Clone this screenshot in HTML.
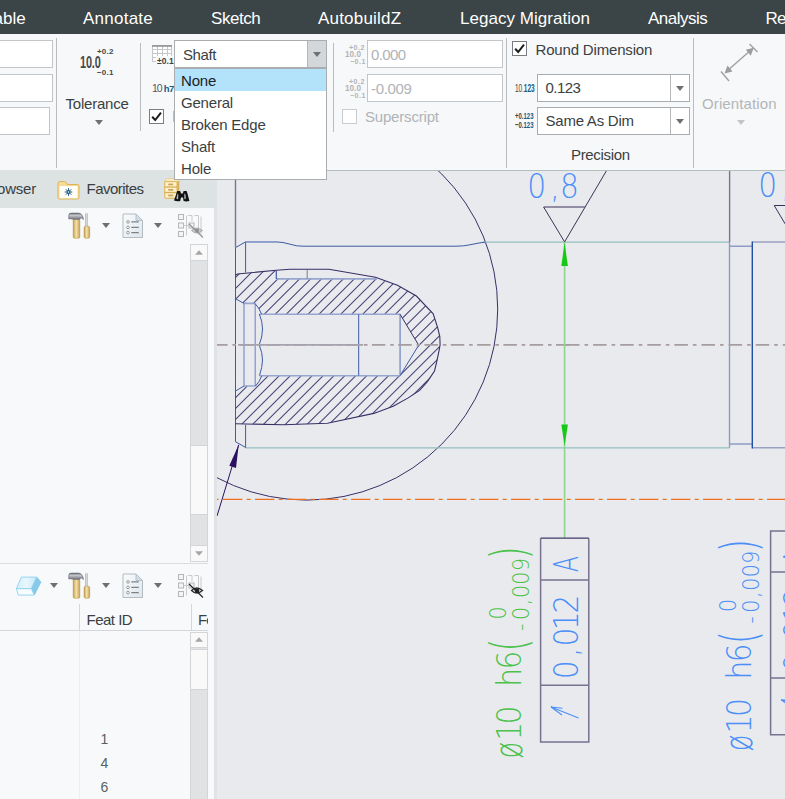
<!DOCTYPE html>
<html><head><meta charset="utf-8"><title>Drawing</title>
<style>
*{box-sizing:border-box;margin:0;padding:0}
html,body{width:785px;height:799px;overflow:hidden;background:#e9eaee}
body{position:relative;font-family:"Liberation Sans",sans-serif;color:#3a3f42;font-size:14px}
.abs{position:absolute}
#hdr{left:0;top:0;width:785px;height:34px;background:#3b4446}
#hdr span{position:absolute;top:9px;color:#fff;font-size:17px;white-space:nowrap;line-height:20px}
#rib{left:0;top:34px;width:785px;height:137px;background:#f7f8fa;border-bottom:1px solid #b3bfbd}
.sep{position:absolute;width:1px;background:#b9bdc0}
.inp{position:absolute;background:#fff;border:1px solid #c3c6c9}
.txt{position:absolute;white-space:nowrap;line-height:18px}
.dis{color:#b0b3b6}
.cb{position:absolute;width:15px;height:15px;border:1px solid #7a7e82;background:#fff}
.tri{position:absolute;width:0;height:0;border-left:4px solid transparent;border-right:4px solid transparent;border-top:5px solid #6d7174}
#left{left:0;top:170px;width:217px;height:629px;background:#dfe3e5}
#tabs{left:0;top:170px;width:217px;height:38px;background:#dde2e3}
#tree{left:0;top:208px;width:214px;height:591px;background:#f7f9fa}
.sb{position:absolute;background:#e1e2e4;border:1px solid #d3d5d8}
.thumb{position:absolute;background:#f9f9fa;border:1px solid #d3d5d8}
#dd{left:174px;top:68px;width:153px;height:112px;background:#fff;border:1px solid #a9adb0}
#dd div{height:22px;line-height:24px;padding-left:6px;font-size:15px;letter-spacing:-.2px;color:#3a3f42}
</style></head><body>
<div id="hdr" class="abs">
<span style="left:-6.5px">able</span><span style="left:83px;letter-spacing:.24px">Annotate</span><span style="left:211px;letter-spacing:-.43px">Sketch</span><span style="left:318px;letter-spacing:.2px">AutobuildZ</span><span style="left:460px;letter-spacing:.04px">Legacy Migration</span><span style="left:648px;letter-spacing:-.52px">Analysis</span><span style="left:765.5px;letter-spacing:-.9px">Review</span>
</div>
<div id="rib" class="abs">
<!-- left inputs -->
<div class="inp" style="left:-10px;top:6px;width:63px;height:28px"></div>
<div class="inp" style="left:-10px;top:40px;width:63px;height:28px"></div>
<div class="inp" style="left:-10px;top:73px;width:60px;height:28px"></div>
<div class="sep" style="left:56px;top:4px;height:130px"></div>
<!-- tolerance big icon -->
<div class="txt" style="left:79.500px;top:18px;font-size:16.5px;font-weight:bold;letter-spacing:-.2px;color:#45484b;transform:scaleX(.66);transform-origin:0 0;line-height:20px">10.0</div>
<div class="txt" style="left:97px;top:12.5px;font-size:8px;font-weight:bold;color:#45484b;line-height:10px;letter-spacing:.2px">+0.2</div>
<div class="txt" style="left:97px;top:33.500px;font-size:8px;font-weight:bold;color:#45484b;line-height:10px;letter-spacing:.2px">&minus;0.1</div>
<div class="txt" id="t_tol" style="left:65.5px;top:61px;font-size:15px;letter-spacing:-0.22px">Tolerance</div>
<div class="tri" style="left:95px;top:86px"></div>
<div class="sep" style="left:140px;top:9px;height:88px"></div>
<!-- table icon -->
<svg class="abs" style="left:151px;top:10px" width="22" height="22" viewBox="0 0 22 22"><rect x="1.5" y="1.5" width="19" height="16" fill="#fff" stroke="#c5c8ca"/><path d="M1.5 5.5h19M1.5 9.5h19M1.500 13.500h19M6.5 1.5v16M11.5 1.5v16M16.5 1.5v16" stroke="#c5c8ca" fill="none"/><rect x="1" y="1" width="20" height="1.800" fill="#96999c"/></svg>
<div class="txt" style="left:156px;top:22px;font-size:8.5px;font-weight:bold;color:#3f4346;line-height:9px;background:#f7f8fa;padding:1px 0 0 1px;letter-spacing:.1px">&plusmn;0.1</div>
<div class="txt" style="left:152px;top:49px;font-size:10.5px;color:#55595c;line-height:10px;letter-spacing:-1px">10<span style="color:#135d86;font-size:9.5px;font-weight:bold;margin-left:2px;letter-spacing:-.6px">h7</span></div>
<div class="cb" style="left:149px;top:75px"><svg width="13" height="13" viewBox="0 0 13 13" style="display:block"><path d="M2.200 6.800l3 3.200L11 2.600" stroke="#1c1c1c" stroke-width="2" fill="none"/></svg></div>
<div class="abs" style="left:172.500px;top:77px;width:1.500px;height:11px;background:#eab66a"></div>
<!-- combo shaft -->
<div class="inp" style="left:174px;top:6px;width:153px;height:28px;border-color:#a9adb0"></div>
<div class="abs" style="left:307px;top:7px;width:19px;height:26px;background:#d4d7d9;border-left:1px solid #b5b8bb"></div>
<div class="tri" style="left:313px;top:18px"></div>
<div class="txt" id="t_shaft" style="left:183px;top:12px;font-size:15px;letter-spacing:-0.38px">Shaft</div>
<div class="sep" style="left:333px;top:9px;height:89px"></div>
<!-- disabled icons -->
<div class="txt dis" style="left:345px;top:16.7px;font-size:8.200px;font-weight:bold;line-height:8px;letter-spacing:0;color:#b1b4b6">10.0</div>
<div class="txt dis" style="left:349px;top:10px;font-size:7px;font-weight:bold;line-height:7px;letter-spacing:.5px;color:#b1b4b6">+0.2</div>
<div class="txt dis" style="left:350px;top:24px;font-size:7px;font-weight:bold;line-height:7px;letter-spacing:.5px;color:#b1b4b6">&minus;0.1</div>
<div class="txt dis" style="left:345px;top:50.7px;font-size:8.200px;font-weight:bold;line-height:8px;letter-spacing:0;color:#b1b4b6">10.0</div>
<div class="txt dis" style="left:349px;top:44px;font-size:7px;font-weight:bold;line-height:7px;letter-spacing:.5px;color:#b1b4b6">+0.2</div>
<div class="txt dis" style="left:350px;top:58px;font-size:7px;font-weight:bold;line-height:7px;letter-spacing:.5px;color:#b1b4b6">&minus;0.1</div>
<div class="inp" style="left:367px;top:6px;width:136px;height:28px"></div>
<div class="txt dis" id="t_v1" style="left:371px;top:12px;font-size:15px;letter-spacing:-0.6px">0.000</div>
<div class="inp" style="left:367px;top:40px;width:136px;height:28px"></div>
<div class="txt dis" id="t_v2" style="left:371px;top:46px;font-size:15px;letter-spacing:-0.33px">-0.009</div>
<div class="cb" style="left:342px;top:75px;border-color:#c9ccce"></div>
<div class="txt dis" id="t_sup" style="left:365px;top:74px;font-size:15px;letter-spacing:-0.19px">Superscript</div>
<div class="sep" style="left:506px;top:4px;height:130px"></div>
<!-- precision group -->
<div class="cb" style="left:512px;top:7px"><svg width="13" height="13" viewBox="0 0 13 13" style="display:block"><path d="M2.200 6.800l3 3.200L11 2.600" stroke="#1c1c1c" stroke-width="2" fill="none"/></svg></div>
<div class="txt" id="t_rd" style="left:535.5px;top:6.7px;font-size:15px;letter-spacing:-0.17px">Round Dimension</div>
<div class="txt" style="left:514.500px;top:50px;font-size:10px;line-height:10px;letter-spacing:-.1px;color:#3e4245;transform:scaleX(.65);transform-origin:0 0">10.<b style="color:#135d86">123</b></div>
<div class="inp" style="left:537px;top:40px;width:153px;height:28px;border-color:#a9adb0"></div>
<div class="abs" style="left:670px;top:41px;width:1px;height:26px;background:#b5b8bb"></div>
<div class="tri" style="left:676px;top:52px"></div>
<div class="txt" id="t_p1" style="left:545.5px;top:45px;font-size:15px;letter-spacing:-0.52px">0.123</div>
<div class="txt" style="left:514.500px;top:78.200px;font-size:9.5px;font-weight:bold;line-height:8.700px;color:#3e4245;transform:scaleX(.63);transform-origin:0 0">+0.<span style="color:#135d86">123</span><br>&minus;0.<span style="color:#135d86">123</span></div>
<div class="inp" style="left:537px;top:73px;width:153px;height:28px;border-color:#a9adb0"></div>
<div class="abs" style="left:670px;top:74px;width:1px;height:26px;background:#b5b8bb"></div>
<div class="tri" style="left:676px;top:85px"></div>
<div class="txt" id="t_p2" style="left:545.5px;top:78px;font-size:15px;letter-spacing:-0.23px">Same As Dim</div>
<div class="txt" id="t_prec" style="left:571px;top:112px;font-size:15px;letter-spacing:-0.33px">Precision</div>
<div class="sep" style="left:693px;top:4px;height:130px"></div>
<!-- orientation -->
<svg class="abs" style="left:716px;top:8px" width="46" height="40" viewBox="716 42 46 40"><g stroke="#9b9ea0" stroke-width="1.3" fill="none"><path d="M727 71L751 50"/><path d="M721 71.5l8 9.5M749.5 44l8 8"/></g><path d="M724.5 73.5l8-2-5-6zM753.8 47.8l-8 2 5 6z" fill="#9b9ea0"/></svg>
<div class="txt dis" id="t_ori" style="left:702px;top:61px;font-size:15px;color:#b3b6b8;letter-spacing:0.11px">Orientation</div>
<div class="tri" style="left:737px;top:86px;border-top-color:#c3c5c7"></div>
</div>
<div id="left" class="abs"></div>
<div id="tabs" class="abs">
<div class="txt" style="left:-3px;top:10px;font-size:15px;letter-spacing:-.2px">owser</div>
<svg class="abs" style="left:57px;top:9px" width="23" height="22" viewBox="0 0 23 22"><path d="M1 5q0-2.500 2-2.500h4.500q1.200 0 2 1.500l.8 1.500h10.200q1.500 0 1.500 1.500v11.500q0 1.500-1.500 1.500h-18q-1.500 0-1.500-1.500z" fill="#f6dc9a" stroke="#dfb253"/><rect x="2" y="6.500" width="19" height="13" rx=".8" fill="#fffdf6" stroke="#ecd08a" stroke-width=".7"/><g stroke="#1b5c88" stroke-width="1"><path d="M11.5 9.200v7.600M7.700 13h7.600M8.800 10.300l5.400 5.400M14.200 10.300l-5.400 5.400"/></g><circle cx="11.500" cy="13" r="1.900" fill="#1b5c88"/><circle cx="11.500" cy="13" r=".8" fill="#fff"/></svg>
<div class="txt" id="t_fav" style="left:86.5px;top:10px;font-size:15px;letter-spacing:-.52px">Favorites</div>
<svg class="abs" style="left:164px;top:8px" width="26" height="25" viewBox="0 0 26 25"><defs><linearGradient id="bn" x1="0" x2="1"><stop offset="0" stop-color="#1a1a1a"/><stop offset=".45" stop-color="#c4c6c8"/><stop offset=".8" stop-color="#3a3a3a"/><stop offset="1" stop-color="#111"/></linearGradient></defs><path d="M.5 3.500L3 .6h10.500l1.800 2.900z" fill="#fbeec8" stroke="#e2bf6c" stroke-width=".6"/><path d="M13 3.500h2.300v15.500l-2.300 1.600z" fill="#d7b15a"/><rect x=".6" y="3.400" width="12.500" height="17" rx=".8" fill="#f7dc98" stroke="#d9b25c" stroke-width=".8"/><path d="M.6 9h12.500M.6 14.600h12.500" stroke="#cfa650" stroke-width=".9"/><g fill="#fdf1cf"><rect x="1.600" y="4.500" width="10.500" height="3.600"/><rect x="1.600" y="10" width="10.500" height="3.600"/><rect x="1.600" y="15.600" width="10.500" height="3.600"/></g><g fill="#c9a557"><rect x="4.200" y="5.600" width="5" height="1.700"/><rect x="4.200" y="11" width="5" height="1.700"/><rect x="4.200" y="16.600" width="5" height="1.700"/></g><path d="M10 22.500l2.200-6.500 1-3h3l.8 2.500h1.800l.8-2.500h3l1 3 1.800 7q-3 .8-5.800 0l-.6-3.500h-2l-.8 3.500q-3 .8-6.200-.5z" fill="#111"/><path d="M11.800 20.800l1.900-5h1.600l-.8 5.300q-1.400.3-2.700-.3z" fill="url(#bn)"/><path d="M19.600 15.800h1.600l1.600 5q-1.300.5-2.600.3z" fill="url(#bn)"/></svg>
</div>
<div id="tree" class="abs">
<!-- tree toolbar -->
<svg class="abs" style="left:68px;top:4px" width="23" height="27" viewBox="0 0 23 27"><defs><linearGradient id="wd1" x1="0" x2="1"><stop offset="0" stop-color="#c29a4c"/><stop offset=".45" stop-color="#f6e3ae"/><stop offset="1" stop-color="#c79f52"/></linearGradient><linearGradient id="hd1" x1="0" x2="0" y1="0" y2="1"><stop offset="0" stop-color="#70747b"/><stop offset=".35" stop-color="#c3c6cb"/><stop offset="1" stop-color="#6a6e75"/></linearGradient></defs><rect x="5.200" y="7" width="6.600" height="19.200" rx="1.500" fill="url(#wd1)" stroke="#b08a42" stroke-width=".5"/><path d="M.8 6.900V3Q.9 1.300 3 1.100H10.500Q14.800 1.500 15.400 7.600Q14.400 4.900 12.200 6.400L11.800 7.300H5.200Q3 6.400 .8 6.900z" fill="url(#hd1)" stroke="#5d6168" stroke-width=".6"/><rect x="17.200" y="1.400" width="2.500" height="13" fill="#aeb1b8"/><rect x="17.900" y="1.400" width=".9" height="13" fill="#dfe1e4"/><rect x="16.100" y="14.200" width="5.600" height="12" rx="1.500" fill="url(#wd1)" stroke="#b08a42" stroke-width=".5"/></svg><svg class="abs" style="left:122px;top:5px" width="22" height="26" viewBox="0 0 22 26"><defs><linearGradient id="dg5" x1="0" x2="1" y1="0" y2="1"><stop offset="0" stop-color="#fbfcfd"/><stop offset="1" stop-color="#dde6ec"/></linearGradient></defs><path d="M1 1h13l6.500 6.500v17h-19.500z" fill="url(#dg5)" stroke="#b3bac0"/><path d="M14 1v6.500h6.500z" fill="#cfe0ea" stroke="#b3bac0" stroke-width=".8"/><g stroke="#7d8287" stroke-width="1.100"><path d="M9.300 8.900h7.500M9.300 14.400h7.500M9.300 19.600h7.500"/></g><g fill="#fff" stroke="#7d8287" stroke-width=".8"><circle cx="6" cy="8.900" r="1.300"/><circle cx="6" cy="14.400" r="1.300"/><circle cx="6" cy="19.600" r="1.300"/></g></svg><svg class="abs" style="left:177px;top:5px" width="27" height="26" viewBox="0 0 27 26"><g fill="#f3f4f5" stroke="#b4b7ba" stroke-width="1"><rect x="1.5" y="1.5" width="5" height="5"/><rect x="1.5" y="10" width="5" height="5"/><rect x="1.5" y="18.5" width="5" height="5"/><rect x="12" y="10" width="5" height="5"/></g><path d="M6.5 12.5h5.5M9.5 2.5v20M11 2.5h4v6M17.5 2.5h4v14M24 3.5v18" stroke="#c9cbcd" fill="none"/><path d="M14.5 17.5q5-5 11 0q-6 5-11 0z" fill="#c8cacc" stroke="#9a9da0" stroke-width=".8"/><circle cx="20" cy="17.6" r="2" fill="#8d9093"/><path d="M12 11l14 13.5" stroke="#8e9194" stroke-width="1.1"/></svg>
<div class="tri" style="left:102px;top:15px"></div><div class="tri" style="left:154px;top:15px"></div>
<div class="sb" style="left:190px;top:36px;width:18px;height:318px"></div>
<div class="thumb" style="left:190px;top:36px;width:18px;height:17px"></div>
<svg class="abs" style="left:195px;top:42px" width="8" height="5"><path d="M0 4.700L4 .2 8 4.700z" fill="#a3a6a9"/></svg>
<div class="thumb" style="left:190px;top:237px;width:18px;height:70px"></div>
<div class="thumb" style="left:190px;top:337px;width:18px;height:17px"></div>
<svg class="abs" style="left:195px;top:343px" width="8" height="5"><path d="M0 .3L4 4.800 8 .3z" fill="#a3a6a9"/></svg>
<div class="abs" style="left:0;top:355px;width:208px;height:1px;background:#d9dde0"></div>
<!-- second toolbar -->
<svg class="abs" style="left:15px;top:366px" width="28" height="24" viewBox="0 0 28 24"><defs><linearGradient id="er" x1="0" x2="1"><stop offset="0" stop-color="#d2eefb"/><stop offset=".5" stop-color="#e9f7fd"/><stop offset="1" stop-color="#c3e8f8"/></linearGradient></defs><path d="M21.700 3.100L25.900 8.100L19.400 20.900L16.300 14.600z" fill="#86c9e9" stroke="#7cc4e6" stroke-width=".8"/><path d="M1.400 14.600H16.300L19.200 21.100H3.300z" fill="#f7fcfe" stroke="#8fd2ef" stroke-width=".9"/><path d="M6.400 3.100H21.700L16.300 14.600H1.400z" fill="url(#er)" stroke="#8fd2ef" stroke-width=".9"/></svg>
<div class="tri" style="left:50px;top:375px"></div>
<svg class="abs" style="left:68px;top:364px" width="23" height="27" viewBox="0 0 23 27"><defs><linearGradient id="wd2" x1="0" x2="1"><stop offset="0" stop-color="#c29a4c"/><stop offset=".45" stop-color="#f6e3ae"/><stop offset="1" stop-color="#c79f52"/></linearGradient><linearGradient id="hd2" x1="0" x2="0" y1="0" y2="1"><stop offset="0" stop-color="#70747b"/><stop offset=".35" stop-color="#c3c6cb"/><stop offset="1" stop-color="#6a6e75"/></linearGradient></defs><rect x="5.200" y="7" width="6.600" height="19.200" rx="1.500" fill="url(#wd2)" stroke="#b08a42" stroke-width=".5"/><path d="M.8 6.900V3Q.9 1.300 3 1.100H10.500Q14.800 1.500 15.400 7.600Q14.400 4.900 12.200 6.400L11.800 7.300H5.200Q3 6.400 .8 6.900z" fill="url(#hd2)" stroke="#5d6168" stroke-width=".6"/><rect x="17.200" y="1.400" width="2.500" height="13" fill="#aeb1b8"/><rect x="17.900" y="1.400" width=".9" height="13" fill="#dfe1e4"/><rect x="16.100" y="14.200" width="5.600" height="12" rx="1.500" fill="url(#wd2)" stroke="#b08a42" stroke-width=".5"/></svg><svg class="abs" style="left:122px;top:365px" width="22" height="26" viewBox="0 0 22 26"><defs><linearGradient id="dg365" x1="0" x2="1" y1="0" y2="1"><stop offset="0" stop-color="#fbfcfd"/><stop offset="1" stop-color="#dde6ec"/></linearGradient></defs><path d="M1 1h13l6.500 6.500v17h-19.500z" fill="url(#dg365)" stroke="#b3bac0"/><path d="M14 1v6.500h6.500z" fill="#cfe0ea" stroke="#b3bac0" stroke-width=".8"/><g stroke="#7d8287" stroke-width="1.100"><path d="M9.300 8.900h7.500M9.300 14.400h7.500M9.300 19.600h7.500"/></g><g fill="#fff" stroke="#7d8287" stroke-width=".8"><circle cx="6" cy="8.900" r="1.300"/><circle cx="6" cy="14.400" r="1.300"/><circle cx="6" cy="19.600" r="1.300"/></g></svg><svg class="abs" style="left:177px;top:365px" width="27" height="26" viewBox="0 0 27 26"><g fill="#f3f4f5" stroke="#b4b7ba" stroke-width="1"><rect x="1.5" y="1.5" width="5" height="5"/><rect x="1.5" y="10" width="5" height="5"/><rect x="1.5" y="18.5" width="5" height="5"/><rect x="12" y="10" width="5" height="5"/></g><path d="M6.5 12.5h5.5M9.5 2.5v20M11 2.5h4v6M17.5 2.5h4v14M24 3.5v18" stroke="#c9cbcd" fill="none"/><path d="M14.5 17.5q5-5 11 0q-6 5-11 0z" fill="#e9eaeb" stroke="#2a2c2e" stroke-width="1.300"/><circle cx="20" cy="17.6" r="2.300" fill="#222"/><path d="M12 11l14 13.5" stroke="#222" stroke-width="1.1"/></svg>
<div class="tri" style="left:102px;top:375px"></div><div class="tri" style="left:154px;top:375px"></div>
<!-- table header -->
<div class="abs" style="left:0;top:422px;width:208px;height:1px;background:#d3d7da"></div>
<div class="abs" style="left:79px;top:396px;width:1px;height:27px;background:#d3d7da"></div>
<div class="abs" style="left:79px;top:423px;width:1px;height:180px;background:#eceef0"></div>
<div class="abs" style="left:191px;top:396px;width:1px;height:27px;background:#d3d7da"></div>
<div class="txt" id="t_feat" style="left:86.5px;top:403px;font-size:15px;letter-spacing:-.5px">Feat ID</div>
<div class="txt" style="left:198px;top:403px;font-size:15px;width:10px;overflow:hidden;letter-spacing:-.8px">Fe</div>
<div class="sb" style="left:190px;top:424px;width:18px;height:170px"></div>
<div class="thumb" style="left:190px;top:424px;width:18px;height:16px"></div>
<svg class="abs" style="left:195px;top:429px" width="8" height="5"><path d="M0 4.700L4 .2 8 4.700z" fill="#a3a6a9"/></svg>
<div class="thumb" style="left:190px;top:441px;width:18px;height:41px"></div>
<div class="txt" style="left:100.5px;top:522px;font-size:14px;color:#5b5f63">1</div>
<div class="txt" style="left:100.5px;top:546px;font-size:14px;color:#5b5f63">4</div>
<div class="txt" style="left:100.5px;top:570px;font-size:14px;color:#5b5f63">6</div>
</div>
<svg id="draw" class="abs" style="left:217px;top:171px" width="568" height="628" viewBox="217 171 568 628" fill="none" stroke-width="1">
<defs><clipPath id="hc"><path clip-rule="evenodd" d="M235.3 275.2L237.5 274.0L276.2 270.3L276.2 278.9L377 278.9L397.5 285.3L416.4 296.0L433.2 313.8L437.8 328.1L439.8 336.5L440.1 344.8L439.1 350.3L436.6 362.4L434.5 371.0L427.6 381.3L419.6 390.4L408.2 397.9L393.2 406.3L373.8 413.4L327.5 423.2L283.5 424.7L235.4 423.8ZM235.5 298.8L244 303.4L255 303.4Q259 307.500 261.500 314L400.1 314.3L418.6 345.2L400.1 375.6L261.800 375.7Q259.5 382 255.5 386L244 386L235.5 391Z"/></clipPath></defs>
<circle cx="306.7" cy="309.1" r="191" stroke="#3a2f66"/>
<path d="M482.500 242.1H729.5M245.6 447.8H729.5" stroke="#92bfbd" stroke-width="1.3"/>
<path d="M235.5 247.6V441.7L245.6 447.5V424.8M235.5 247.6L245.6 241.9V272.5M245.6 241.9H276Q283 242 290 244.200T303 246.2H456Q464 246.200 471 244.600T485.300 242.100" stroke="#3f5aa6"/>
<path clip-path="url(#hc)" d="M40.2 440L220.2 260M51.1 440L231.1 260M62.0 440L242.0 260M73.0 440L253.0 260M83.9 440L263.9 260M94.8 440L274.8 260M105.7 440L285.7 260M116.7 440L296.7 260M127.6 440L307.6 260M138.5 440L318.5 260M149.5 440L329.5 260M160.4 440L340.4 260M171.3 440L351.3 260M182.2 440L362.2 260M193.2 440L373.2 260M204.1 440L384.1 260M215.0 440L395.0 260M226.0 440L406.0 260M236.9 440L416.9 260M247.8 440L427.8 260M258.8 440L438.8 260M269.7 440L449.7 260M280.6 440L460.6 260M291.5 440L471.5 260M302.5 440L482.5 260M313.4 440L493.4 260M324.3 440L504.3 260M335.3 440L515.3 260M346.2 440L526.2 260M357.1 440L537.1 260M368.1 440L548.1 260M379.0 440L559.0 260M389.9 440L569.9 260M400.9 440L580.9 260M411.8 440L591.8 260M422.7 440L602.7 260M433.6 440L613.6 260M444.6 440L624.6 260M455.5 440L635.5 260" stroke="#4a4275" stroke-width="1.05"/>
<path d="M235.3 275.2L237.5 274.0L276.2 270.3L290.0 269.3L328.9 269.3L375.5 277.2L397.5 285.3L416.4 296.0L433.2 313.8L437.8 328.1L439.8 336.5L440.1 344.8L439.1 350.3L436.6 362.4L434.5 371.0L427.6 381.3L419.6 390.4L408.2 397.9L393.2 406.3L373.8 413.4L327.5 423.2L283.5 424.7L235.4 423.8" stroke="#3a2f66" stroke-width="1.1"/>
<path d="M276.2 278.9H377" stroke="#97a6d0" stroke-width="1.6"/><path d="M276.300 270.300V278.900" stroke="#3f5aa6" stroke-width="1.2"/>
<path d="M307.2 270V278.5" stroke="#83869a" stroke-width="1.1"/>
<path d="M245.600 241.900H276" stroke="#8fa0cf" stroke-width="1.5"/>
<path d="M259.3 314.300H400.1M259.500 375.800H400.100M244 303.400H255.200M244 386H255.500" stroke="#97a6d0" stroke-width="1.6"/>
<path d="M244 303.400V386M255.2 303.400V386" stroke="#7d90c8" stroke-width="1.2"/>
<path d="M235.5 298.8L244 303.4M255 303.500Q259 307.500 261.500 314M235.5 391L244 386M255.500 386Q259.5 382 261.800 375.700M358.7 314.300V375.600" stroke="#3f5aa6"/>
<path d="M259.3 314Q262.500 321 262.500 329T259.2 344.900Q262.600 353 262.500 360T259.500 375.500" stroke="#3f5aa6"/>
<path d="M400.100 314.300V375.600" stroke="#8c9cca" stroke-width="1.6"/>
<path d="M400.100 314.300L418.700 345.200" stroke="#3a2f66"/><path d="M418.700 345.200L400.100 375.600" stroke="#3f5aa6"/>
<path d="M235.5 170V247.600M729.6 170V242" stroke="#7c7296" stroke-width="1.4"/>
<path d="M729.5 242V447.800M729.5 246.200H752.300M729.5 444H752.300" stroke="#8f9bc4" stroke-width="1.4"/>
<path d="M752.300 242H786M752.300 447.800H786" stroke="#9aa0c2" stroke-width="1.4"/>
<path d="M752.300 241.500V448.400" stroke="#1f4fa3" stroke-width="1.4"/>
<path d="M214.100 344.800H569.500" stroke="#a69da0" stroke-width="1.7" stroke-dasharray="13.5 4.800 3.600 4.400"/>
<path d="M566 344.800H790" stroke="#a69da0" stroke-width="1.7" stroke-dasharray="13.5 5 3.600 5"/>
<path d="M238 344.800H363" stroke="#a7a3ae" stroke-width="1.7"/>
<path d="M191 499.400H790" stroke="#f26f1f" stroke-width="1.25" stroke-dasharray="19.4 4.300 3.900 4.400"/>
<path d="M238.700 444.800L217 516" stroke="#2b1160" stroke-width="1"/><path d="M238.700 444.800L229.300 465.800L236 468z" fill="#2b1160"/>
<path d="M564.600 242V538" stroke="#8fd48f" stroke-width="1.6"/>
<path d="M564.600 242.500L561.300 266H567.900zM564.600 446L561.300 424.500H567.900z" fill="#17c817"/>
<path d="M564.600 241.900L543.600 207H584.800M564.600 241.900L606.300 171" stroke="#3d3158" stroke-width="1"/>
<path d="M795 240.400L774.200 205.500H790" stroke="#3d3158" stroke-width="1"/>
<path d="M540.600 538.200V742H588.800V538.200M540.600 580.100H588.800M540.600 685.300H588.800" stroke="#77728f" stroke-width="1.5"/>
<path d="M540.600 538.200H588.800" stroke="#45396a" stroke-width="1.2"/>
<path d="M790 530.900H770.600V734.700H790M770.600 572H790M770.600 678H790" stroke="#77728f" stroke-width="1.5"/>
<path d="M578.600 717.900L551 707l11.500 1.200M551 707l11 8" stroke="#4b8ff7" stroke-width="1.1"/>
<path d="M790 702.500L781 699.700l9 .6M781 699.700l7 5" stroke="#4b8ff7" stroke-width="1.1"/>
<!--TEXT--><g font-family="'DejaVu Sans Light','DejaVu Sans',sans-serif" font-weight="200">
<text transform="translate(521.5 800) rotate(-90) scale(0.720 1)" font-size="38.0" fill="#4cc24c" x="57.5" y="0">ø</text>
<text transform="translate(521.0 800) rotate(-90) scale(0.900 1)" font-size="33.0" fill="#4cc24c" x="65.9 84.0 89.0 125.7 145.0" y="0">10 h6</text>
<text transform="translate(525.5 800) rotate(-90) scale(1.000 1.49)" font-size="33.0" fill="#4cc24c" x="148.6" y="0">(</text>
<text transform="translate(505.9 800) rotate(-90) scale(0.880 1)" font-size="23.5" fill="#4cc24c" x="205.2" y="0">0</text>
<text transform="translate(529.0 800) rotate(-90) scale(0.880 1)" font-size="23.5" fill="#4cc24c" x="192.0 204.6 221.2 229.5 244.7 260.2" y="0">-0,009</text>
<text transform="translate(525.5 800) rotate(-90) scale(1.000 1.49)" font-size="33.0" fill="#4cc24c" x="240.7" y="0">)</text>
<text transform="translate(578.0 800) rotate(-90) scale(0.900 1)" font-size="33.0" fill="#4b8ff7" x="134.1 158.9 170.5 188.5 207.2" y="0">0,012</text>
<text transform="translate(577.5 800) rotate(-90) scale(0.720 1)" font-size="33.0" fill="#4b8ff7" x="316.5" y="0">A</text>
<text transform="translate(751.5 800) rotate(-90) scale(0.720 1)" font-size="38.0" fill="#4b8ff7" x="67.7" y="0">ø</text>
<text transform="translate(751.0 800) rotate(-90) scale(0.900 1)" font-size="33.0" fill="#4b8ff7" x="74.0 92.1 97.1 133.8 153.1" y="0">10 h6</text>
<text transform="translate(755.5 800) rotate(-90) scale(1.000 1.49)" font-size="33.0" fill="#4b8ff7" x="155.9" y="0">(</text>
<text transform="translate(735.9 800) rotate(-90) scale(0.880 1)" font-size="23.5" fill="#4b8ff7" x="213.5" y="0">0</text>
<text transform="translate(759.0 800) rotate(-90) scale(0.880 1)" font-size="23.5" fill="#4b8ff7" x="200.3 212.9 229.5 237.8 253.0 268.5" y="0">-0,009</text>
<text transform="translate(755.5 800) rotate(-90) scale(1.000 1.49)" font-size="33.0" fill="#4b8ff7" x="248.0" y="0">)</text>
<text transform="translate(808.0 800) rotate(-90) scale(0.900 1)" font-size="33.0" fill="#4b8ff7" x="142.2 167.0 178.6 196.6 215.3" y="0">0,012</text>
<text transform="translate(807.5 800) rotate(-90) scale(0.720 1)" font-size="33.0" fill="#4b8ff7" x="326.6" y="0">A</text>
<text transform="translate(0 198.1) scale(0.900 1)" font-size="33.0" fill="#4b8ff7" x="585.8 611.3 622.1" y="0">0,8</text>
<text transform="translate(0 196.6) scale(0.900 1)" font-size="33.0" fill="#4b8ff7" x="842.6 868.1 878.9" y="0">0,8</text>
</g><!--/TEXT-->
</svg>
<div id="dd" class="abs"><div style="background:#b3e3fb;color:#1d2124">None</div><div>General</div><div>Broken Edge</div><div>Shaft</div><div>Hole</div></div>
</body></html>
